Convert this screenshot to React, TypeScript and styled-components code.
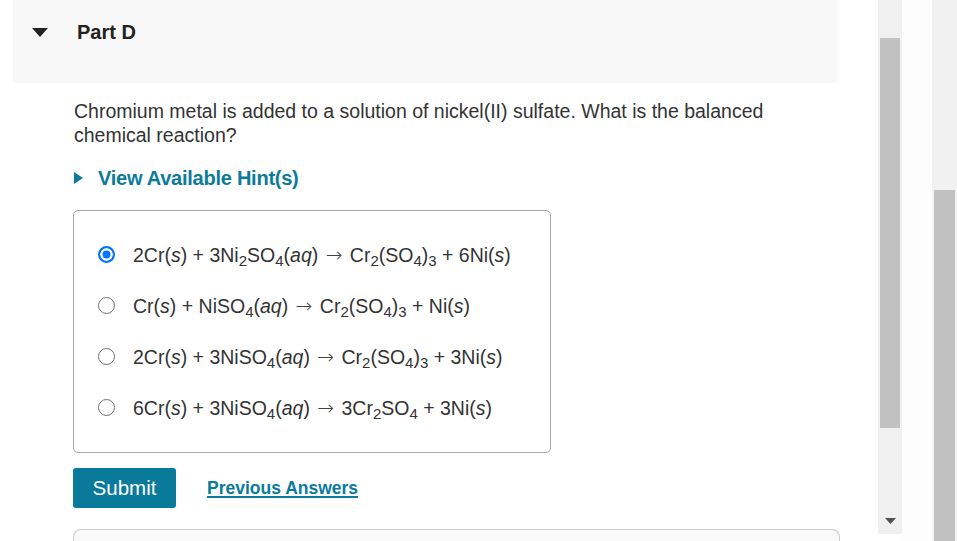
import styled, { createGlobalStyle } from "styled-components";

const GlobalStyle = createGlobalStyle`
  html, body {
    margin: 0;
    padding: 0;
    background: #ffffff;
  }
  body {
    font-family: "Liberation Sans", Arial, sans-serif;
    color: #333333;
  }
`;

const options = [
  {
    id: "a",
    checked: true,
    eq: (
      <>
        2Cr(<i>s</i>) + 3Ni<sub>2</sub>SO<sub>4</sub>(<i>aq</i>) <Arrow>→</Arrow> Cr<sub>2</sub>(SO<sub>4</sub>)<sub>3</sub> + 6Ni(<i>s</i>)
      </>
    ),
  },
  {
    id: "b",
    checked: false,
    eq: (
      <>
        Cr(<i>s</i>) + NiSO<sub>4</sub>(<i>aq</i>) <Arrow>→</Arrow> Cr<sub>2</sub>(SO<sub>4</sub>)<sub>3</sub> + Ni(<i>s</i>)
      </>
    ),
  },
  {
    id: "c",
    checked: false,
    eq: (
      <>
        2Cr(<i>s</i>) + 3NiSO<sub>4</sub>(<i>aq</i>) <Arrow>→</Arrow> Cr<sub>2</sub>(SO<sub>4</sub>)<sub>3</sub> + 3Ni(<i>s</i>)
      </>
    ),
  },
  {
    id: "d",
    checked: false,
    eq: (
      <>
        6Cr(<i>s</i>) + 3NiSO<sub>4</sub>(<i>aq</i>) <Arrow>→</Arrow> 3Cr<sub>2</sub>SO<sub>4</sub> + 3Ni(<i>s</i>)
      </>
    ),
  },
];

export default function App() {
  return (
    <>
      <GlobalStyle />
      <Page>
        <Main>
          <Section>
            <Header>
              <svg width="16" height="9" viewBox="0 0 16 9">
                <polygon points="0,0 16,0 8,9" fill="#222" />
              </svg>
              <Title>Part D</Title>
            </Header>
            <Body>
              <Question>
                Chromium metal is added to a solution of nickel(II) sulfate. What is the balanced
                chemical reaction?
              </Question>
              <Hint href="#">
                <svg width="9" height="12" viewBox="0 0 9 12">
                  <polygon points="0,0 9,6 0,12" fill="#0b7b9c" />
                </svg>
                View Available Hint(s)
              </Hint>
              <Choices>
                {options.map((o) => (
                  <Choice key={o.id}>
                    <Radio type="radio" name="partD" defaultChecked={o.checked} />
                    <Equation>{o.eq}</Equation>
                  </Choice>
                ))}
              </Choices>
              <Actions>
                <SubmitButton>Submit</SubmitButton>
                <PrevLink href="#">Previous Answers</PrevLink>
              </Actions>
              <NextPanel />
            </Body>
          </Section>
        </Main>
        <ScrollTrack $width={24} $bg="#f0f0f0" $height={534}>
          <Thumb $top={38} $height={390} />
          <Spacer />
          <DownArrow>
            <svg width="11" height="6" viewBox="0 0 11 6">
              <polygon points="0,0 11,0 5.5,6" fill="#505050" />
            </svg>
          </DownArrow>
        </ScrollTrack>
        <Gap />
        <ScrollTrack $width={25} $bg="#f1f1f1" $height={541}>
          <Thumb $top={190} $grow />
        </ScrollTrack>
      </Page>
    </>
  );
}

function Arrow({ children }: { children: React.ReactNode }) {
  return <ArrowGlyph>{children}</ArrowGlyph>;
}

const Page = styled.div`
  display: flex;
  width: 957px;
  height: 541px;
  overflow: hidden;
`;

const Main = styled.div`
  flex: 0 0 878px;
  padding-left: 13px;
  box-sizing: border-box;
`;

const Section = styled.div`
  width: 825px;
`;

const Header = styled.div`
  height: 83px;
  background: #f8f8f8;
  display: flex;
  align-items: center;
  padding: 0 0 19px 19px;
  box-sizing: border-box;
`;

const Title = styled.h2`
  margin: 0 0 0 29px;
  font-size: 20px;
  font-weight: bold;
  color: #222222;
`;

const Body = styled.div`
  padding-left: 60px;
`;

const Question = styled.p`
  margin: 16px 0 0 1px;
  width: 720px;
  font-size: 19.5px;
  line-height: 24px;
  color: #333333;
`;

const Hint = styled.a`
  display: flex;
  align-items: center;
  gap: 15px;
  margin: 19px 0 0 1px;
  height: 24px;
  font-size: 20px;
  font-weight: bold;
  color: #0b7b9c;
  text-decoration: none;
  letter-spacing: -0.25px;
`;

const Choices = styled.div`
  margin-top: 20px;
  width: 478px;
  border: 1px solid #a8a8a8;
  border-radius: 5px;
  padding: 18px 0 19px 24px;
  box-sizing: border-box;
`;

const Choice = styled.label`
  display: flex;
  align-items: center;
  height: 51px;
  gap: 18px;
`;

const Radio = styled.input`
  appearance: none;
  margin: 0;
  width: 17px;
  height: 17px;
  border: 1.5px solid #6f6f6f;
  border-radius: 50%;
  box-sizing: border-box;
  background: #ffffff;

  &:checked {
    border: 2px solid #0075ff;
    background: #0075ff;
    box-shadow: inset 0 0 0 2.5px #ffffff;
  }
`;

const Equation = styled.span`
  font-size: 19.5px;
  color: #333333;
  white-space: nowrap;

  sub {
    font-size: 15px;
    line-height: 0;
    vertical-align: -4px;
  }

  i {
    font-style: italic;
  }
`;

const ArrowGlyph = styled.span`
  font-family: "DejaVu Sans", sans-serif;
  font-weight: 200;
  font-size: 20px;
  color: #444444;
  margin: 0 2px;
`;

const Actions = styled.div`
  display: flex;
  align-items: center;
  gap: 31px;
  margin-top: 15px;
`;

const SubmitButton = styled.button`
  width: 103px;
  height: 40px;
  border: none;
  border-radius: 3px;
  background: #0a7a9a;
  color: #ffffff;
  font-family: "Liberation Sans", Arial, sans-serif;
  font-size: 20.5px;
  padding: 0;
`;

const PrevLink = styled.a`
  font-size: 17.5px;
  font-weight: bold;
  color: #0b7b9c;
  text-decoration: underline;
  text-underline-offset: 2px;
  text-decoration-thickness: 1.5px;
`;

const NextPanel = styled.div`
  margin-top: 21px;
  width: 765px;
  height: 30px;
  border: 1px solid #cccccc;
  border-bottom: none;
  border-radius: 8px 8px 0 0;
  background: #f9f9f9;
`;

const ScrollTrack = styled.div<{ $width: number; $bg: string; $height: number }>`
  flex: 0 0 ${(p) => p.$width}px;
  height: ${(p) => p.$height}px;
  background: ${(p) => p.$bg};
  display: flex;
  flex-direction: column;
  align-items: stretch;
  padding: 0 2px;
  box-sizing: border-box;
`;

const Thumb = styled.div<{ $top: number; $height?: number; $grow?: boolean }>`
  margin-top: ${(p) => p.$top}px;
  background: #c1c1c1;
  ${(p) => (p.$grow ? "flex: 1;" : `height: ${p.$height}px;`)}
`;

const Spacer = styled.div`
  flex: 1;
`;

const DownArrow = styled.div`
  display: flex;
  justify-content: center;
  padding-bottom: 10px;
`;

const Gap = styled.div`
  flex: 0 0 30px;
  background: #fdfdfd;
`;
